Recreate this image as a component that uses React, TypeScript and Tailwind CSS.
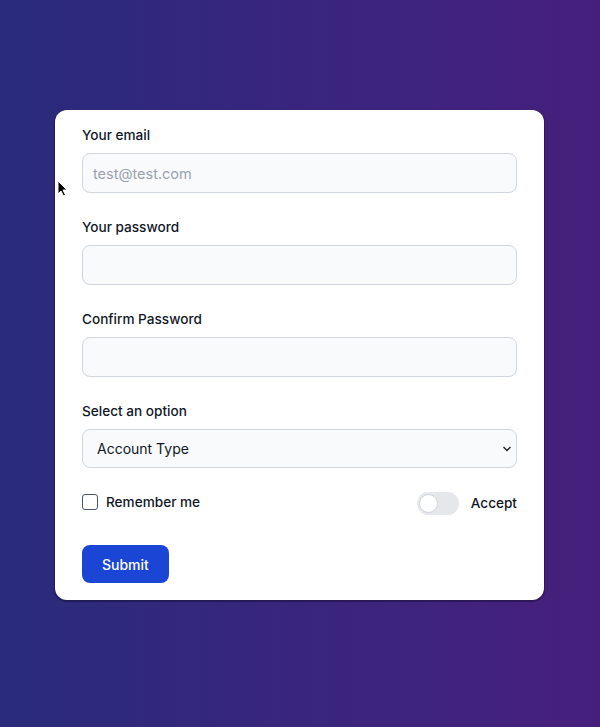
import React from "react";

export default function App() {
  return (
    <div
      className="relative min-h-[727px] w-full bg-gradient-to-r from-[#292b7b] to-[#461f7d] pt-[110px]"
      style={{ fontFamily: 'Inter, "Liberation Sans", Arial, sans-serif' }}
    >
      <div className="ml-[55px] w-[489px] rounded-xl bg-white px-[27px] pt-[15px] pb-[17px] shadow-[0_1px_1px_1px_rgba(0,0,0,0.3)]">
        <div className="mb-6">
          <label className="mb-2 block text-[13.6px] leading-5 font-medium text-gray-900">Your email</label>
          <input
            type="email"
            placeholder="test@test.com"
            className="block h-10 w-full rounded-lg border border-gray-300 bg-gray-50 px-2.5 text-[14.5px] text-gray-900 placeholder:text-gray-400 outline-none"
          />
        </div>
        <div className="mb-6">
          <label className="mb-2 block text-[13.6px] leading-5 font-medium text-gray-900">Your password</label>
          <input
            type="password"
            className="block h-10 w-full rounded-lg border border-gray-300 bg-gray-50 px-2.5 text-[14.5px] text-gray-900 outline-none"
          />
        </div>
        <div className="mb-6">
          <label className="mb-2 block text-[13.6px] leading-5 font-medium text-gray-900">Confirm Password</label>
          <input
            type="password"
            className="block h-10 w-full rounded-lg border border-gray-300 bg-gray-50 px-2.5 text-[14.5px] text-gray-900 outline-none"
          />
        </div>
        <div className="mb-6">
          <label className="mb-2 block text-[13.6px] leading-5 font-medium text-gray-900">Select an option</label>
          <div className="relative">
            <select className="block h-[39px] w-full appearance-none rounded-lg border border-gray-300 bg-gray-50 px-[14px] text-[14px] text-gray-900 outline-none">
              <option>Account Type</option>
            </select>
            <svg className="pointer-events-none absolute right-[5px] top-[16px]" width="10" height="8" viewBox="0 0 10 8">
              <path d="M1.5 2 L5 5.5 L8.5 2" fill="none" stroke="#222" strokeWidth="1.4" />
            </svg>
          </div>
        </div>
        <div className="flex items-center justify-between">
          <label className="flex items-center gap-2 pb-[3px]">
            <span className="block h-4 w-4 rounded-[3px] border border-gray-600 bg-white"></span>
            <span className="text-[13.6px] font-medium text-gray-900">Remember me</span>
          </label>
          <label className="flex items-center gap-3">
            <span className="relative block h-[23px] w-[42px] rounded-full bg-gray-200">
              <span className="absolute left-[2px] top-[2px] block h-[19px] w-[19px] rounded-full border border-gray-300 bg-white"></span>
            </span>
            <span className="text-[13.6px] font-medium text-gray-900">Accept</span>
          </label>
        </div>
        <button className="mt-[30px] h-[38px] rounded-lg bg-[#1b46d5] px-5 text-[14px] font-medium text-white">
          Submit
        </button>
      </div>
      <svg className="absolute left-[57px] top-[180px] z-10" width="11" height="17" viewBox="0 0 11 17">
        <path d="M1 1 L1 14 L4 11 L6.5 16 L8.5 15 L6 10 L10 10 Z" fill="#000" stroke="#fff" strokeWidth="1" />
      </svg>
    </div>
  );
}
